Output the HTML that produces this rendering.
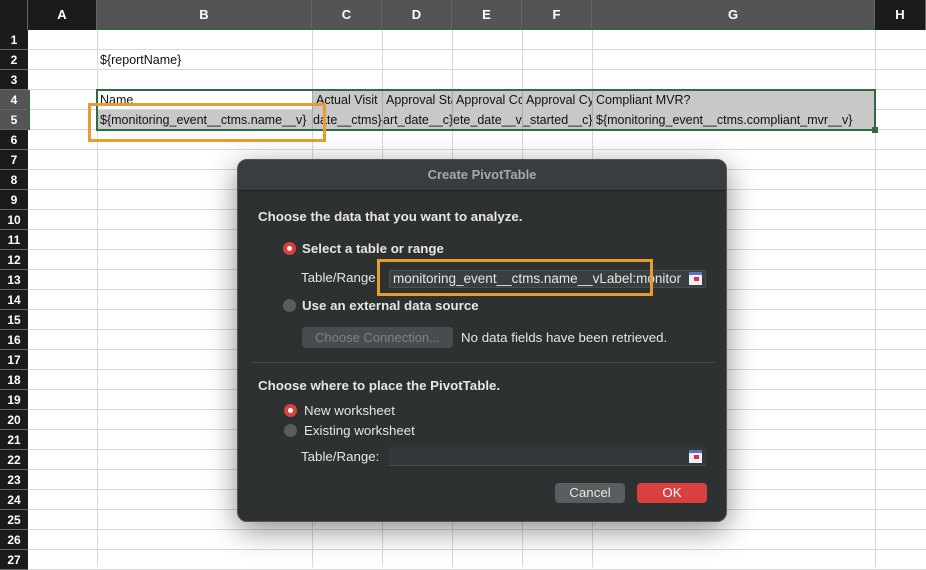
<!DOCTYPE html><html><head><style>
body{margin:0;width:926px;height:567px;overflow:hidden;background:#fff;font-family:"Liberation Sans",sans-serif;position:relative}
.a{position:absolute;box-sizing:border-box}
.ch{top:0;height:30px;color:#fff;font-weight:bold;font-size:13px;text-align:center;line-height:30px;border-right:1px solid #666}
.rh{left:0;width:28px;height:20px;color:#fff;font-weight:bold;font-size:12px;text-align:center;line-height:20px;border-bottom:1px solid #666}
.vl{top:30px;bottom:0;width:1px;background:#d8d8d8}
.hl{left:28px;right:0;height:1px;background:#d8d8d8}
.c{font-size:12.5px;color:#111;line-height:20px;white-space:nowrap;overflow:hidden;padding-left:3px}
.dt{color:#e6e6e6;font-size:13.3px}
.b{font-weight:bold}
.rad{width:13px;height:13px;border-radius:50%}
.on{background:#d9403f}.on::after{content:"";position:absolute;left:4px;top:4px;width:5px;height:5px;border-radius:50%;background:#fff}
.off{background:#5a5d5f}
.ic{width:13px;height:13px;background:#eef;border-top:3px solid #5577bb}
.ic::after{content:"";position:absolute;left:5px;top:2px;width:5px;height:4px;background:#d33}
</style></head><body>
<div class="a ch" style="left:0;width:28px;background:#1b1b1b"></div>
<div class="a ch" style="left:28px;width:69px;background:#1b1b1b">A</div>
<div class="a ch" style="left:97px;width:215px;background:#545454">B</div>
<div class="a ch" style="left:312px;width:70px;background:#545454">C</div>
<div class="a ch" style="left:382px;width:70px;background:#545454">D</div>
<div class="a ch" style="left:452px;width:70px;background:#545454">E</div>
<div class="a ch" style="left:522px;width:70px;background:#545454">F</div>
<div class="a ch" style="left:592px;width:283px;background:#545454">G</div>
<div class="a ch" style="left:875px;width:51px;background:#1b1b1b">H</div>
<div class="a" style="left:97px;top:28px;width:778px;height:2px;background:#2e6b3f"></div>
<div id="rows"></div>
<div class="a vl" style="left:97px"></div><div class="a vl" style="left:312px"></div><div class="a vl" style="left:382px"></div><div class="a vl" style="left:452px"></div><div class="a vl" style="left:522px"></div><div class="a vl" style="left:592px"></div><div class="a vl" style="left:875px"></div>
<script>
let s='';for(let i=1;i<=27;i++){let t=30+(i-1)*20;let g=(i==4||i==5);s+=`<div class="a rh" style="top:${t}px;background:${g?'#545454':'#1b1b1b'}">${i}</div><div class="a hl" style="top:${t+19}px"></div>`;}
document.getElementById('rows').innerHTML=s;
</script>
<div class="a" style="left:28px;top:90px;width:2px;height:40px;background:#2e6b3f"></div>
<div class="a c" style="left:97px;top:50px;width:215px">${reportName}</div>
<div class="a" style="left:312px;top:90px;width:563px;height:20px;background:#c8c8c8"></div>
<div class="a" style="left:97px;top:110px;width:778px;height:20px;background:#c8c8c8"></div>
<div class="a c" style="left:97px;top:90px;width:215px">Name</div>
<div class="a c" style="left:312px;top:90px;width:70px;border-left:1px solid #aaa">Actual Visit E</div>
<div class="a c" style="left:382px;top:90px;width:70px;border-left:1px solid #aaa">Approval Sta</div>
<div class="a c" style="left:452px;top:90px;width:70px;border-left:1px solid #aaa">Approval Co</div>
<div class="a c" style="left:522px;top:90px;width:70px;border-left:1px solid #aaa">Approval Cy</div>
<div class="a c" style="left:592px;top:90px;width:283px;border-left:1px solid #aaa">Compliant MVR?</div>
<div class="a c" style="left:97px;top:110px;width:215px">${monitoring_event__ctms.name__v}</div>
<div class="a c" style="left:312px;top:110px;width:70px;border-left:1px solid #aaa;padding-left:0">date__ctms}</div>
<div class="a c" style="left:382px;top:110px;width:70px;border-left:1px solid #aaa;padding-left:0">art_date__c}</div>
<div class="a c" style="left:452px;top:110px;width:70px;border-left:1px solid #aaa;padding-left:0">ete_date__v}</div>
<div class="a c" style="left:522px;top:110px;width:70px;border-left:1px solid #aaa;padding-left:0">_started__c}</div>
<div class="a c" style="left:592px;top:110px;width:283px;border-left:1px solid #aaa">${monitoring_event__ctms.compliant_mvr__v}</div>
<div class="a" style="left:96px;top:89px;width:780px;height:42px;border:2px solid #2e6b3f"></div>
<div class="a" style="left:872px;top:127px;width:6px;height:6px;background:#2e6b3f"></div>
<div class="a" style="left:88px;top:103px;width:238px;height:39px;border:3px solid #e89c30"></div>
<div class="a" style="left:237px;top:159px;width:490px;height:363px;background:#2d3132;border:1px solid #555;border-radius:10px;box-shadow:0 8px 30px rgba(0,0,0,.45);overflow:hidden">
<div class="a" style="left:0;top:0;width:488px;height:31px;background:#3a3d3f;border-bottom:1px solid #1f2223;color:#a8a8a8;font-weight:bold;font-size:13px;text-align:center;line-height:30px">Create PivotTable</div>
<div class="a dt b" style="left:20px;top:49px">Choose the data that you want to analyze.</div>
<div class="a rad on" style="left:45px;top:82px"></div>
<div class="a dt b" style="left:64px;top:81px">Select a table or range</div>
<div class="a dt" style="left:63px;top:110px">Table/Range</div>
<div class="a" style="left:151px;top:110px;width:317px;height:18px;background:#3a3e40;border:1px solid #4a4e50"></div>
<div class="a dt" style="left:155px;top:111px;font-size:13.5px">monitoring_event__ctms.name__vLabel:monitor</div>
<div class="a ic" style="left:451px;top:112px"></div>
<div class="a rad off" style="left:45px;top:139px"></div>
<div class="a dt b" style="left:64px;top:138px">Use an external data source</div>
<div class="a" style="left:64px;top:167px;width:151px;height:21px;background:#484c4e;border-radius:4px;color:#7e8183;font-size:13px;text-align:center;line-height:21px">Choose Connection...</div>
<div class="a dt" style="left:223px;top:170px">No data fields have been retrieved.</div>
<div class="a" style="left:13px;top:202px;width:464px;height:1px;background:#45494b"></div>
<div class="a dt b" style="left:20px;top:218px">Choose where to place the PivotTable.</div>
<div class="a rad on" style="left:46px;top:244px"></div>
<div class="a dt" style="left:66px;top:243px">New worksheet</div>
<div class="a rad off" style="left:46px;top:264px"></div>
<div class="a dt" style="left:66px;top:263px">Existing worksheet</div>
<div class="a dt" style="left:63px;top:289px">Table/Range:</div>
<div class="a" style="left:151px;top:287px;width:317px;height:19px;background:#33383a;border-bottom:1px solid #4a4e50"></div>
<div class="a ic" style="left:451px;top:290px"></div>
<div class="a" style="left:317px;top:323px;width:70px;height:20px;background:#5a5e60;border-radius:4px;color:#e6e6e6;font-size:13.3px;text-align:center;line-height:20px">Cancel</div>
<div class="a" style="left:399px;top:323px;width:70px;height:20px;background:#d9403f;border-radius:4px;color:#fff;font-size:13.3px;text-align:center;line-height:20px">OK</div>
</div>
<div class="a" style="left:377px;top:259px;width:276px;height:37px;border:3px solid #e89c30"></div>
</body></html>
